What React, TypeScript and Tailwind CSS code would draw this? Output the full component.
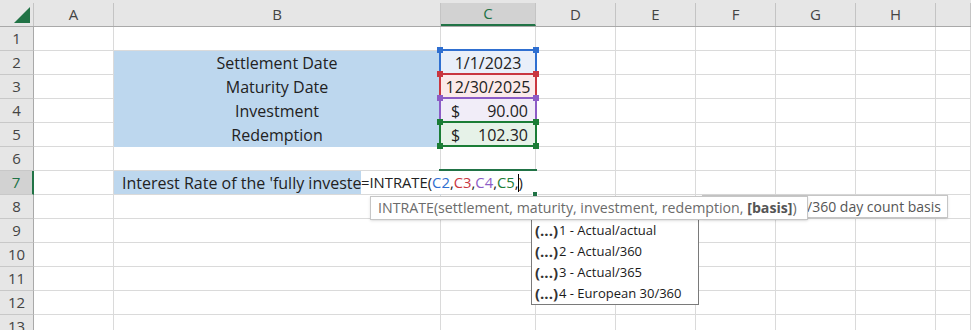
import React from "react";

const FONT = "font-['Open_Sans',sans-serif]";
const UI = "font-['Open_Sans',sans-serif]";

const cols = [
  { key: "A", w: "w-[80px]" },
  { key: "B", w: "w-[327px]" },
  { key: "C", w: "w-[95px]" },
  { key: "D", w: "w-[80px]" },
  { key: "E", w: "w-[80px]" },
  { key: "F", w: "w-[80px]" },
  { key: "G", w: "w-[80px]" },
  { key: "H", w: "w-[80px]" },
  { key: "", w: "flex-1" },
];

const rows = [1, 2, 3, 4, 5, 6, 7, 8, 9, 10, 11, 12, 13];

const FILL = "bg-[#bdd7ee] border-b-[#bdd7ee] border-r-[#bdd7ee]";

function Accounting({ value }: { value: string }) {
  return (
    <div className="flex w-full justify-between pl-[10px] pr-[7px]">
      <span>$</span>
      <span>{value}</span>
    </div>
  );
}

const cells: Record<string, { content: React.ReactNode; cls: string }> = {
  B2: { content: "Settlement Date", cls: `${FILL} justify-center` },
  B3: { content: "Maturity Date", cls: `${FILL} justify-center` },
  B4: { content: "Investment", cls: `${FILL} justify-center` },
  B5: { content: "Redemption", cls: `${FILL} justify-center` },
  B7: {
    content: "Interest Rate of the 'fully invested' security",
    cls: "bg-[#bdd7ee] border-r-[#bdd7ee] justify-start pl-[8px]",
  },
  C2: { content: "1/1/2023", cls: "bg-[#e9eff9] justify-center" },
  C3: { content: "12/30/2025", cls: "bg-[#fbeaea] justify-center" },
  C4: { content: <Accounting value="90.00" />, cls: "bg-[#f1edf8]" },
  C5: { content: <Accounting value="102.30" />, cls: "bg-[#e6f2e8]" },
};

const ranges = [
  { row: 2, border: "border-[#2f6fd0]", sq: "bg-[#2f6fd0]" },
  { row: 3, border: "border-[#c9363f]", sq: "bg-[#c9363f]" },
  { row: 4, border: "border-[#8c5cc6]", sq: "bg-[#8c5cc6]" },
  { row: 5, border: "border-[#1b7d36]", sq: "bg-[#1b7d36]" },
];

const basisOptions = [
  "1 - Actual/actual",
  "2 - Actual/360",
  "3 - Actual/365",
  "4 - European 30/360",
];

function RangeBox({ row, border, sq }: { row: number; border: string; sq: string }) {
  const top = 26 + 24 * (row - 2) + 24 - 1;
  return (
    <div className="absolute left-[439px] w-[98px] h-[26px]" style={{ top }}>
      <div className={`absolute inset-0 border-2 ${border}`} />
      <div className={`absolute -left-[2px] -top-[2px] w-[6px] h-[6px] ${sq}`} />
      <div className={`absolute -right-[2px] -top-[2px] w-[6px] h-[6px] ${sq}`} />
      <div className={`absolute -left-[2px] -bottom-[2px] w-[6px] h-[6px] ${sq}`} />
      <div className={`absolute -right-[2px] -bottom-[2px] w-[6px] h-[6px] ${sq}`} />
    </div>
  );
}

export default function App() {
  return (
    <div className={`relative h-[330px] w-[971px] overflow-hidden bg-white text-[#222] ${FONT}`}>
      {/* column headers */}
      <div className="flex h-[27px] items-end bg-[#e6e6e6] border-b border-[#a9a9a9]">
        <div className="relative h-[23px] w-[34px] border-r border-[#c4c4c4]">
          <svg className="absolute left-0 top-[-3px]" width="34" height="26" viewBox="0 0 34 26">
            <polygon points="14,23 30,23 30,7" fill="#217346" />
          </svg>
        </div>
        {cols.map((c) => (
          <div
            key={c.key || "I"}
            className={`${c.w} flex h-[23px] items-center justify-center border-r border-[#c4c4c4] text-[15px] ${
              c.key === "C"
                ? "bg-[#d2d2d2] text-[#217346] border-b-2 border-b-[#217346]"
                : "text-[#444]"
            }`}
          >
            {c.key}
          </div>
        ))}
      </div>

      {/* rows */}
      {rows.map((r) => (
        <div key={r} className="flex h-[24px]">
          <div
            className={`flex w-[34px] items-center justify-center border-b border-b-[#c8c8c8] text-[15px] ${
              r === 7
                ? "bg-[#d2d2d2] text-[#217346] border-r-2 border-r-[#217346]"
                : "bg-[#e6e6e6] text-[#444] border-r border-r-[#a9a9a9]"
            }`}
          >
            {r}
          </div>
          {cols.map((c) => {
            const cell = cells[`${c.key}${r}`];
            return (
              <div
                key={c.key || "I"}
                className={`${c.w} flex items-center overflow-hidden whitespace-nowrap border-r border-b border-[#dadada] text-[16px] ${
                  cell ? cell.cls : ""
                }`}
              >
                {cell?.content}
              </div>
            );
          })}
        </div>
      ))}

      {/* formula reference ranges */}
      {ranges.map((g) => (
        <RangeBox key={g.row} {...g} />
      ))}

      {/* cell being edited */}
      <div className="absolute left-[439px] top-[169px] h-[2px] w-[98px] bg-[#217346]" />
      <div className="absolute left-[361px] top-[171px] flex h-[23px] w-[176px] items-center bg-white text-[14.8px] whitespace-nowrap">
        <span>=INTRATE(</span>
        <span className="text-[#2f6fd0]">C2</span>
        <span>,</span>
        <span className="text-[#c9363f]">C3</span>
        <span>,</span>
        <span className="text-[#8c5cc6]">C4</span>
        <span>,</span>
        <span className="text-[#1b7d36]">C5</span>
        <span>,</span>
        <span className="mx-[-0.5px] h-[18px] w-px bg-black" />
        <span>)</span>
      </div>
      <div className="absolute left-[532px] top-[191px] h-[6px] w-[6px] border border-white bg-[#217346]" />

      {/* argument description tip */}
      <div className={`absolute left-[702px] top-[195px] flex h-[23px] w-[246px] items-center justify-end border border-[#c6c6c6] bg-white pr-[6px] text-[14px] text-[#555] shadow-sm whitespace-nowrap ${UI}`}>
        Actual/360 day count basis
      </div>

      {/* basis dropdown */}
      <div className={`absolute left-[531px] top-[218px] w-[168px] border border-[#7a7a7a] bg-white pt-[1px] text-[13px] text-[#1a1a1a] ${UI}`}>
        {basisOptions.map((o) => (
          <div key={o} className="flex h-[21px] items-center pl-[3px]">
            <span className="mr-[1px] text-[15px] font-bold leading-none text-[#333]">(...)</span>
            <span>{o}</span>
          </div>
        ))}
      </div>

      {/* function signature tip */}
      <div className={`absolute left-[370px] top-[196px] flex h-[24px] w-[438px] items-center border border-[#c6c6c6] bg-white pl-[7px] text-[14.2px] text-[#6b6b6b] shadow-sm whitespace-nowrap ${UI}`}>
        INTRATE(settlement, maturity, investment, redemption,&nbsp;
        <b className="font-bold text-[#555]">[basis]</b>)
      </div>
    </div>
  );
}
